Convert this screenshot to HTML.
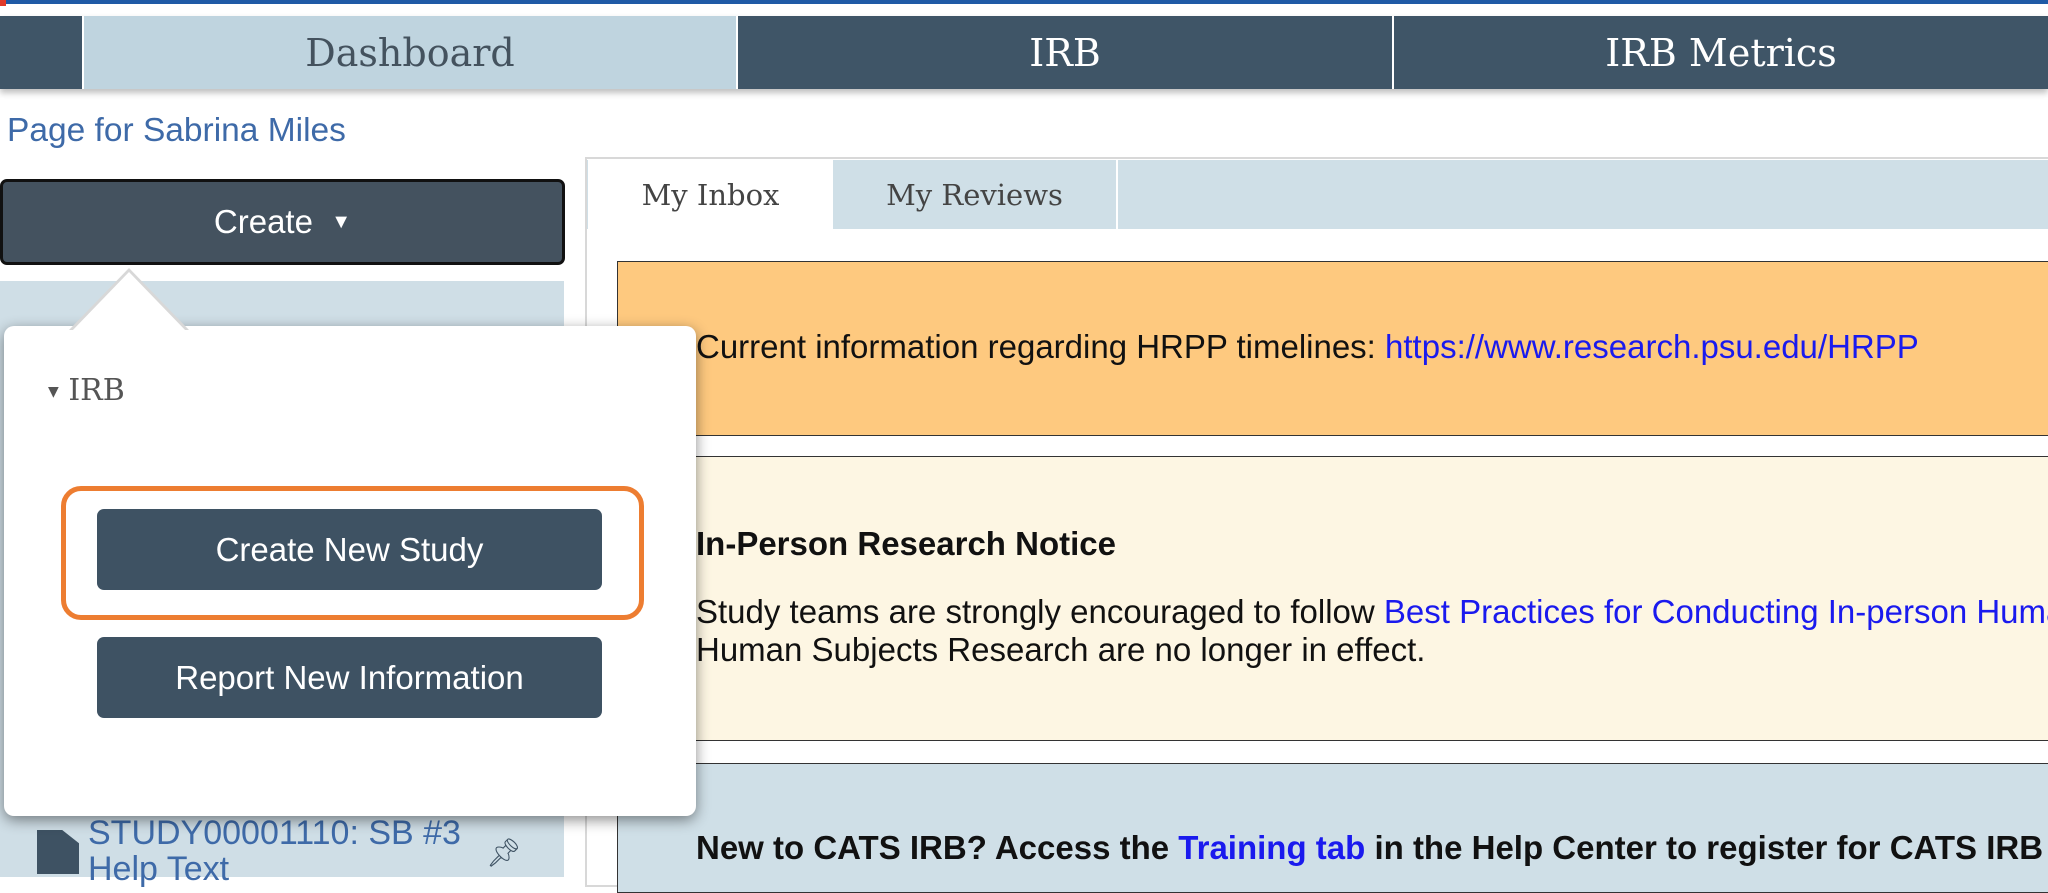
<!DOCTYPE html>
<html><head><meta charset="utf-8"><style>
*{margin:0;padding:0;box-sizing:border-box}
body{width:2048px;height:877px;overflow:hidden;background:#fff;font-family:"Liberation Sans",Arial,sans-serif;position:relative}
.abs{position:absolute}
.serif{font-family:"DejaVu Serif","Liberation Serif",serif}
.tab{position:absolute;top:16px;height:73px;display:flex;align-items:center;justify-content:center;font-size:38px;color:#fff}
.btn{position:absolute;background:#3e5263;color:#fff;border-radius:7px;display:flex;align-items:center;justify-content:center;font-size:33px}
.box{position:absolute;left:617px;width:1440px;border:1.5px solid #333;font-size:33px;color:#111;overflow:hidden}
a{color:#1a1aee;text-decoration:none}
</style></head><body>
<div class="abs" style="left:0;top:0;width:2048px;height:4px;background:#1f5aa6"></div>
<div class="abs" style="left:0;top:0;width:6px;height:6px;background:#e03a2a"></div>
<div class="abs" style="left:0;top:16px;width:2048px;height:73px;background:#3f5567;box-shadow:0 4px 6px rgba(0,0,0,.25)"></div>
<div class="tab serif" style="left:82px;width:656px;background:#bfd4df;color:#44525e;border-left:2px solid #fff;border-right:2px solid #fff">Dashboard</div>
<div class="tab serif" style="left:738px;width:654px">IRB</div>
<div class="tab serif" style="left:1392px;width:656px;border-left:2px solid #fff">IRB Metrics</div>

<div class="abs" style="left:7px;top:112px;font-size:33.5px;color:#3e6aa8">Page for Sabrina Miles</div>

<div class="abs" style="left:0;top:179px;width:565px;height:86px;background:#44525f;border:3px solid #111;border-radius:7px;color:#fff;font-size:33px;display:flex;align-items:center;justify-content:center">Create&nbsp;&nbsp;<span style="font-size:20px">▼</span></div>
<div class="abs" style="left:0;top:281px;width:564px;height:596px;background:#cfdee6"></div>
<div class="abs" style="left:37px;top:830px;width:42px;height:44px;background:#3e5263;clip-path:polygon(0 0,60% 0,100% 30%,100% 100%,0 100%)"></div>
<div class="abs" style="left:88px;top:815px;font-size:34px;line-height:36px;color:#3e6aa8">STUDY00001110: SB #3<br>Help Text</div>
<div class="abs" style="left:486px;top:836px;font-size:28px;color:#3e5263">📌︎</div>

<div class="abs" style="left:585px;top:157px;width:1470px;height:730px;border:2px solid #d8d8d8;border-right:none;background:#fff"></div>
<div class="abs" style="left:587px;top:160px;width:1461px;height:69px;background:#cfdfe7"></div>
<div class="abs serif" style="left:588px;top:160px;width:245px;height:69px;background:#fff;font-size:29px;color:#444;display:flex;align-items:center;justify-content:center">My Inbox</div>
<div class="abs serif" style="left:833px;top:160px;width:285px;height:69px;border-right:2px solid #fff;font-size:29px;color:#444;display:flex;align-items:center;justify-content:center">My Reviews</div>

<div class="box" style="top:261px;height:175px;background:#fec97f"><div class="abs" style="left:78px;top:66px;white-space:nowrap">Current information regarding HRPP timelines: <a>https://www.research.psu.edu/HRPP</a></div></div>
<div class="box" style="top:456px;height:285px;background:#fdf6e3"><div class="abs" style="left:78px;top:68px;white-space:nowrap;font-weight:bold">In-Person Research Notice</div><div class="abs" style="left:78px;top:136px;white-space:nowrap;line-height:38px">Study teams are strongly encouraged to follow <a>Best Practices for Conducting In-person Human Subjects Research</a><br>Human Subjects Research are no longer in effect.</div></div>
<div class="box" style="top:763px;height:130px;background:#cfdfe7"><div class="abs" style="left:78px;top:65px;white-space:nowrap;font-weight:bold">New to CATS IRB? Access the <a>Training tab</a> in the Help Center to register for CATS IRB training</div></div>

<div class="abs" style="left:4px;top:326px;width:692px;height:490px;background:#fff;border-radius:10px;box-shadow:0 4px 14px rgba(0,0,0,.45)"></div>
<div class="abs" style="left:69px;top:268px;width:0;height:0;border-left:60px solid transparent;border-right:60px solid transparent;border-bottom:62px solid #d8d8d8"></div>
<div class="abs" style="left:71px;top:272px;width:0;height:0;border-left:58px solid transparent;border-right:58px solid transparent;border-bottom:60px solid #fff"></div>
<div class="abs serif" style="left:48px;top:373px;font-size:30px;color:#555"><span style="font-size:14px;vertical-align:middle">▼</span> IRB</div>
<div class="abs" style="left:61px;top:486px;width:583px;height:134px;border:5px solid #ed7d31;border-radius:20px"></div>
<div class="btn" style="left:97px;top:509px;width:505px;height:81px">Create New Study</div>
<div class="btn" style="left:97px;top:637px;width:505px;height:81px">Report New Information</div>
</body></html>
